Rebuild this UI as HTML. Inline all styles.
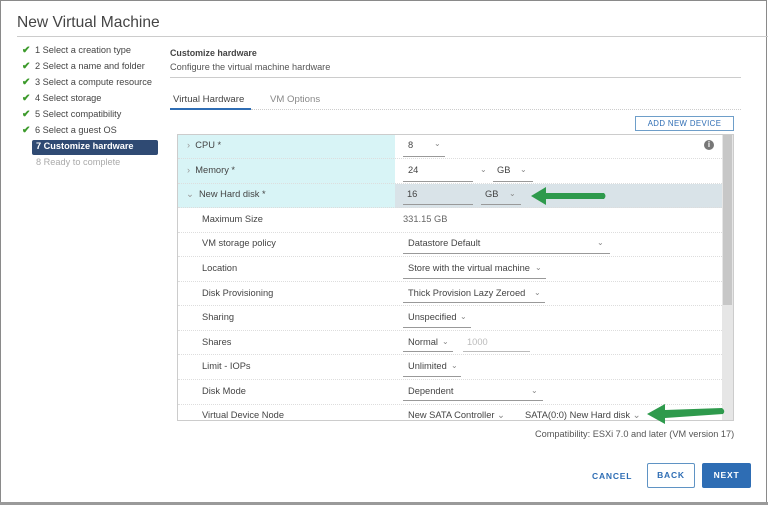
<!DOCTYPE html>
<html><head><style>
*{margin:0;padding:0;box-sizing:border-box}
body{width:768px;height:505px;background:#fff;font-family:"Liberation Sans",sans-serif;position:relative;overflow:hidden;color:#333}
.a{position:absolute;white-space:nowrap}
.dlg{position:absolute;left:0;top:0;width:767px;height:503px;border:1px solid #8a8a8a;background:#fff}
.step{font-size:9.2px;color:#444}
.ck{position:absolute;left:22px;color:#3c9a2b;font-weight:bold;font-size:10px}
.row{position:absolute;left:178px;width:544px;border-bottom:1px dotted #ddd}
.lbl{font-size:9.3px;color:#444}
.val{font-size:9.3px;color:#444}
.ul{position:absolute;border-bottom:1px solid #999}
.cv{position:absolute;font-size:8px;color:#888}
</style></head><body>
<div class="dlg"></div>
<div class="a" style="left:17px;top:14px;font-size:15.6px;color:#444">New Virtual Machine</div>
<div class="a" style="left:17px;top:36px;width:751px;border-top:1px solid #ccc"></div>

<div class="a ck" style="top:45px">✔</div><div class="a step" style="left:35px;top:45px">1 Select a creation type</div>
<div class="a ck" style="top:61px">✔</div><div class="a step" style="left:35px;top:61px">2 Select a name and folder</div>
<div class="a ck" style="top:77px">✔</div><div class="a step" style="left:35px;top:77px">3 Select a compute resource</div>
<div class="a ck" style="top:93px">✔</div><div class="a step" style="left:35px;top:93px">4 Select storage</div>
<div class="a ck" style="top:109px">✔</div><div class="a step" style="left:35px;top:109px">5 Select compatibility</div>
<div class="a ck" style="top:125px">✔</div><div class="a step" style="left:35px;top:125px">6 Select a guest OS</div>
<div class="a" style="left:32px;top:140px;width:126px;height:15px;background:#2f4a73;border-radius:2px"></div>
<div class="a step" style="left:36px;top:141px;color:#fff;font-weight:bold">7 Customize hardware</div>
<div class="a step" style="left:36px;top:157px;color:#aaa">8 Ready to complete</div>

<div class="a" style="left:170px;top:48px;font-size:8.9px;font-weight:bold;color:#444">Customize hardware</div>
<div class="a" style="left:170px;top:62px;font-size:9.2px;color:#555">Configure the virtual machine hardware</div>
<div class="a" style="left:170px;top:77px;width:571px;border-top:1px solid #ccc"></div>
<div class="a" style="left:173px;top:94px;font-size:9.6px;color:#444">Virtual Hardware</div>
<div class="a" style="left:270px;top:94px;font-size:9.6px;color:#888">VM Options</div>
<div class="a" style="left:170px;top:108px;width:81px;border-top:2px solid #2e6db4"></div>
<div class="a" style="left:251px;top:109px;width:490px;border-top:1px dotted #ccc"></div>
<div class="a" style="left:635px;top:116px;width:99px;height:15px;border:1px solid #6e9ec9;font-size:7.8px;color:#2e6db4;text-align:center;line-height:13px;letter-spacing:.4px">ADD NEW DEVICE</div>

<div class="a" style="left:177px;top:134px;width:557px;height:287px;border:1px solid #ccc"></div>
<div class="a" style="left:722px;top:135px;width:11px;height:285px;background:#e6e6e6"></div>
<div class="a" style="left:723px;top:135px;width:9px;height:170px;background:#c7c7c7"></div>
<div class="a" style="left:178px;top:135px;width:217px;height:73px;background:#d8f4f6"></div>
<div class="a" style="left:395px;top:184px;width:327px;height:24px;background:#d9e3e8"></div>
<div class="row" style="top:158px;height:1px"></div>
<div class="row" style="top:183px;height:1px"></div>
<div class="row" style="top:207px;height:1px"></div>

<div class="a lbl" style="left:187px;top:140px"><span style="color:#999">›</span>&nbsp; CPU *</div>
<div class="a lbl" style="left:187px;top:165px"><span style="color:#999">›</span>&nbsp; Memory *</div>
<div class="a lbl" style="left:186px;top:189px"><span style="color:#999">⌄</span>&nbsp; New Hard disk *</div>
<div class="a val" style="left:408px;top:140px">8</div><div class="cv" style="left:434px;top:139px">⌄</div><div class="ul" style="left:403px;top:156px;width:42px"></div>
<div class="a" style="left:704px;top:140px;width:10px;height:10px;border-radius:50%;background:#777;color:#fff;font-size:8px;text-align:center;line-height:10px;font-weight:bold">i</div>
<div class="a val" style="left:408px;top:165px">24</div><div class="cv" style="left:480px;top:165px">⌄</div><div class="ul" style="left:403px;top:181px;width:70px"></div>
<div class="a val" style="left:497px;top:165px">GB</div><div class="cv" style="left:520px;top:165px">⌄</div><div class="ul" style="left:493px;top:181px;width:40px"></div>
<div class="a val" style="left:407px;top:189px">16</div><div class="ul" style="left:403px;top:204px;width:70px"></div>
<div class="a val" style="left:485px;top:189px">GB</div><div class="cv" style="left:509px;top:189px">⌄</div><div class="ul" style="left:481px;top:204px;width:40px"></div>
<svg class="a" style="left:528px;top:185px" width="80" height="22"><path d="M3 11 L18 2 L18 8 L76 8 Q79 11 76 14 L18 14 L18 20 Z" fill="#2e9a4c"/></svg>

<div class="row" style="top:232px"></div>
<div class="row" style="top:256px"></div>
<div class="row" style="top:281px"></div>
<div class="row" style="top:305px"></div>
<div class="row" style="top:330px"></div>
<div class="row" style="top:354px"></div>
<div class="row" style="top:379px"></div>
<div class="row" style="top:404px"></div>

<div class="a lbl" style="left:202px;top:214px">Maximum Size</div>
<div class="a val" style="left:403px;top:214px;color:#666">331.15 GB</div>
<div class="a lbl" style="left:202px;top:238px">VM storage policy</div>
<div class="a val" style="left:408px;top:238px">Datastore Default</div><div class="cv" style="left:597px;top:238px">⌄</div><div class="ul" style="left:403px;top:253px;width:207px"></div>
<div class="a lbl" style="left:202px;top:263px">Location</div>
<div class="a val" style="left:408px;top:263px">Store with the virtual machine</div><div class="cv" style="left:535px;top:263px">⌄</div><div class="ul" style="left:403px;top:278px;width:143px"></div>
<div class="a lbl" style="left:202px;top:288px">Disk Provisioning</div>
<div class="a val" style="left:408px;top:288px">Thick Provision Lazy Zeroed</div><div class="cv" style="left:534px;top:288px">⌄</div><div class="ul" style="left:403px;top:302px;width:142px"></div>
<div class="a lbl" style="left:202px;top:312px">Sharing</div>
<div class="a val" style="left:408px;top:312px">Unspecified</div><div class="cv" style="left:460px;top:312px">⌄</div><div class="ul" style="left:403px;top:327px;width:68px"></div>
<div class="a lbl" style="left:202px;top:337px">Shares</div>
<div class="a val" style="left:408px;top:337px">Normal</div><div class="cv" style="left:442px;top:337px">⌄</div><div class="ul" style="left:403px;top:351px;width:50px"></div>
<div class="a val" style="left:467px;top:337px;color:#bbb">1000</div><div class="ul" style="left:463px;top:351px;width:67px;border-color:#bbb"></div>
<div class="a lbl" style="left:202px;top:361px">Limit - IOPs</div>
<div class="a val" style="left:408px;top:361px">Unlimited</div><div class="cv" style="left:451px;top:361px">⌄</div><div class="ul" style="left:403px;top:376px;width:58px"></div>
<div class="a lbl" style="left:202px;top:386px">Disk Mode</div>
<div class="a val" style="left:408px;top:386px">Dependent</div><div class="cv" style="left:531px;top:386px">⌄</div><div class="ul" style="left:403px;top:400px;width:140px"></div>
<div class="a lbl" style="left:202px;top:410px">Virtual Device Node</div>
<div class="a val" style="left:408px;top:410px">New SATA Controller <span style="color:#888">⌄</span></div>
<div class="a val" style="left:525px;top:410px">SATA(0:0) New Hard disk <span style="color:#888">⌄</span></div>
<svg class="a" style="left:644px;top:402px" width="84" height="24"><path d="M3 12 L21 2 L21 8 L78 6 Q82 9 79 12 L21 16 L21 22 Z" fill="#2e9a4c"/></svg>

<div class="a" style="left:535px;top:429px;font-size:9.2px;color:#555">Compatibility: ESXi 7.0 and later (VM version 17)</div>

<div class="a" style="left:592px;top:471px;font-size:8.5px;color:#2e6db4;letter-spacing:.8px;font-weight:bold">CANCEL</div>
<div class="a" style="left:647px;top:463px;width:48px;height:25px;border:1px solid #5f93c4;border-radius:2px;font-size:8.5px;color:#2e6db4;text-align:center;line-height:23px;letter-spacing:.8px;font-weight:bold">BACK</div>
<div class="a" style="left:702px;top:463px;width:49px;height:25px;background:#2e6db4;border-radius:2px;font-size:8.5px;color:#fff;text-align:center;line-height:25px;letter-spacing:.8px;font-weight:bold">NEXT</div>
<div class="a" style="left:0;top:502px;width:768px;height:3px;background:#9a9a9a"></div>
</body></html>
